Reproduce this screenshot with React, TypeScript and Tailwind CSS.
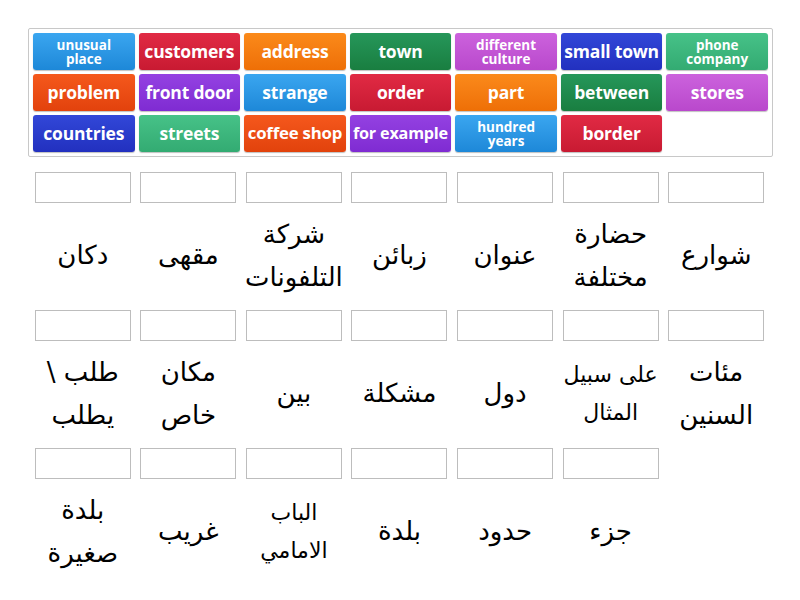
const colors: Record<string, string> = {
  blue: 'bg-gradient-to-b from-[#3aa6f0] to-[#1d88d8]',
  red: 'bg-gradient-to-b from-[#e12a44] to-[#c81a32]',
  orange: 'bg-gradient-to-b from-[#fb8a1a] to-[#ee6f06]',
  green: 'bg-gradient-to-b from-[#26975a] to-[#197e40]',
  magenta: 'bg-gradient-to-b from-[#cc62dd] to-[#b948cc]',
  navy: 'bg-gradient-to-b from-[#3247d8] to-[#2230bf]',
  teal: 'bg-gradient-to-b from-[#46c288] to-[#33ab72]',
  redorange: 'bg-gradient-to-b from-[#f5581c] to-[#e2420c]',
  purple: 'bg-gradient-to-b from-[#9441e2] to-[#7f2bd2]',
}

const tiles: { text: string; color: string; size?: string }[] = [
  { text: 'unusual place', color: 'blue', size: 'small' },
  { text: 'customers', color: 'red' },
  { text: 'address', color: 'orange' },
  { text: 'town', color: 'green' },
  { text: 'different culture', color: 'magenta', size: 'small' },
  { text: 'small town', color: 'navy' },
  { text: 'phone company', color: 'teal', size: 'small' },
  { text: 'problem', color: 'redorange' },
  { text: 'front door', color: 'purple' },
  { text: 'strange', color: 'blue' },
  { text: 'order', color: 'red' },
  { text: 'part', color: 'orange' },
  { text: 'between', color: 'green' },
  { text: 'stores', color: 'magenta' },
  { text: 'countries', color: 'navy' },
  { text: 'streets', color: 'teal' },
  { text: 'coffee shop', color: 'redorange', size: 'text-[16.8px]' },
  { text: 'for example', color: 'purple', size: 'text-[16.2px]' },
  { text: 'hundred years', color: 'blue', size: 'small' },
  { text: 'border', color: 'red' },
]

// each entry is a list of lines
const targets: { lines: string[]; small?: boolean }[][] = [
  [
    { lines: ['دكان'] },
    { lines: ['مقهى'] },
    { lines: ['شركة', 'التلفونات'] },
    { lines: ['زبائن'] },
    { lines: ['عنوان'] },
    { lines: ['حضارة', 'مختلفة'] },
    { lines: ['شوارع'] },
  ],
  [
    { lines: ['طلب \\', 'يطلب'] },
    { lines: ['مكان', 'خاص'] },
    { lines: ['بين'] },
    { lines: ['مشكلة'] },
    { lines: ['دول'] },
    { lines: ['على سبيل', 'المثال'], small: true },
    { lines: ['مئات', 'السنين'] },
  ],
  [
    { lines: ['بلدة', 'صغيرة'] },
    { lines: ['غريب'] },
    { lines: ['الباب', 'الامامي'], small: true },
    { lines: ['بلدة'] },
    { lines: ['حدود'] },
    { lines: ['جزء'] },
  ],
]

function Tile({ text, color, size }: { text: string; color: string; size?: string }) {
  return (
    <div
      className={`h-[37px] rounded-[3px] flex items-center justify-center text-center text-white font-bold shadow-[0_1px_1px_rgba(0,0,0,0.25)] ${colors[color]}`}
    >
      {size === 'small' ? (
        <span className="text-[13.5px] leading-[14px] w-[72px]">{text}</span>
      ) : (
        <span className={`leading-none whitespace-nowrap tracking-[-0.2px] ${size ?? 'text-[17.5px]'}`}>{text}</span>
      )}
    </div>
  )
}

export default function App() {
  return (
    <div className="w-[800px] h-[600px] bg-white pt-[28px] pl-[28px] pr-[27px]" style={{ fontFamily: '"Open Sans", sans-serif' }}>
      <div className="border border-[#c8c8c8] rounded-[2px] p-[4px] grid grid-cols-7 gap-x-[4px] gap-y-[4px]">
        {tiles.map((t) => (
          <Tile key={t.text} {...t} />
        ))}
      </div>

      <div className="mt-[15px] ml-[2px] w-[739px]">
        {targets.map((row, i) => (
          <div key={i} className="grid grid-cols-7 h-[138px]">
            {row.map((cell, j) => (
              <div key={j} className="flex flex-col items-center">
                <div className="w-[96px] h-[31px] border border-[#bdbdbd] bg-white" />
                <div className="flex-1 flex items-center justify-center pb-[2px]">
                  <p
                    dir="rtl"
                    className={`text-center text-black whitespace-nowrap ${cell.small ? 'text-[22px] leading-[38px]' : 'text-[26px] leading-[43px]'}`}
                    style={{ fontFamily: '"DejaVu Sans", sans-serif' }}
                  >
                    {cell.lines.map((l, k) => (
                      <span key={k}>
                        {k > 0 && <br />}
                        {l}
                      </span>
                    ))}
                  </p>
                </div>
              </div>
            ))}
          </div>
        ))}
      </div>
    </div>
  )
}
